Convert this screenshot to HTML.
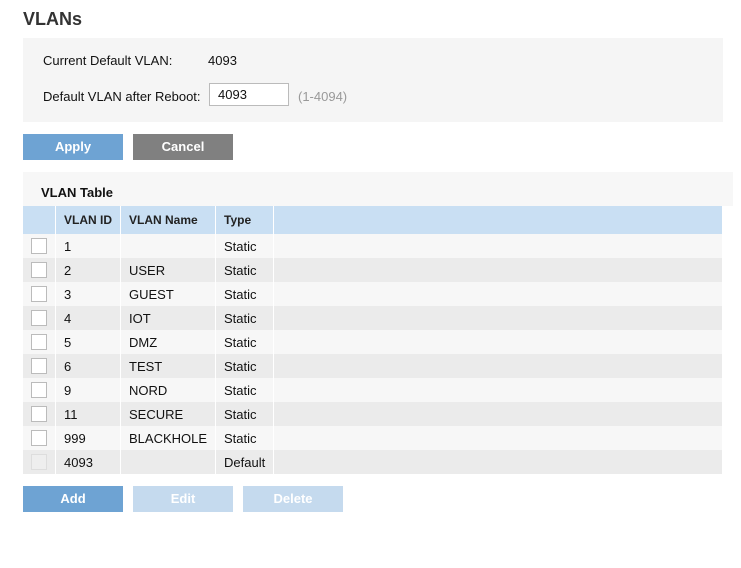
<!DOCTYPE html><html><head><style>
body{margin:0;background:#fff;font-family:"Liberation Sans",Arial,sans-serif;font-size:13px;color:#111;width:741px;height:568px;position:relative;overflow:hidden}
.a{position:absolute}
h1{position:absolute;left:23px;top:9px;margin:0;font-size:18px;font-weight:bold;color:#333}
.btn{position:absolute;width:100px;height:26px;line-height:26px;text-align:center;color:#fff;font-weight:bold;font-size:13px}
table{position:absolute;left:23px;top:206px;border-collapse:collapse;width:700px}
td,th{height:24px;padding:0 0 0 8px;text-align:left;border-right:1px solid #fff;font-size:13px}
th{height:28px;background:#c9dff3;font-weight:bold;color:#222;font-size:12px}
tr:nth-child(even) td{background:#f7f7f7}
tr:nth-child(odd) td{background:#ebebeb}
.cb{display:inline-block;width:14px;height:14px;border:1px solid #bbb;background:#fff;vertical-align:middle}
.cb.d{background:#eee;border-color:#ddd}
</style></head><body>
<h1>VLANs</h1>
<div class="a" style="left:23px;top:38px;width:700px;height:84px;background:#f5f5f5"></div>
<div class="a" style="left:43px;top:53px">Current Default VLAN:</div>
<div class="a" style="left:208px;top:53px">4093</div>
<div class="a" style="left:43px;top:89px">Default VLAN after Reboot:</div>
<div class="a" style="left:209px;top:83px;width:70px;height:21px;border:1px solid #bbb;background:#fff;padding-left:8px;line-height:21px;box-sizing:content-box">4093</div>
<div class="a" style="left:298px;top:89px;color:#999">(1-4094)</div>
<div class="btn" style="left:23px;top:134px;background:#6ea3d3">Apply</div>
<div class="btn" style="left:133px;top:134px;background:#808080">Cancel</div>
<div class="a" style="left:23px;top:172px;width:710px;height:34px;background:#f7f7f7"></div>
<div class="a" style="left:41px;top:185px;font-weight:bold">VLAN Table</div>
<table>
<tr><th style="width:24px"></th><th style="width:56px">VLAN ID</th><th style="width:86px">VLAN Name</th><th style="width:49px">Type</th><th></th></tr>
<tr><td><span class="cb"></span></td><td>1</td><td></td><td>Static</td><td></td></tr>
<tr><td><span class="cb"></span></td><td>2</td><td>USER</td><td>Static</td><td></td></tr>
<tr><td><span class="cb"></span></td><td>3</td><td>GUEST</td><td>Static</td><td></td></tr>
<tr><td><span class="cb"></span></td><td>4</td><td>IOT</td><td>Static</td><td></td></tr>
<tr><td><span class="cb"></span></td><td>5</td><td>DMZ</td><td>Static</td><td></td></tr>
<tr><td><span class="cb"></span></td><td>6</td><td>TEST</td><td>Static</td><td></td></tr>
<tr><td><span class="cb"></span></td><td>9</td><td>NORD</td><td>Static</td><td></td></tr>
<tr><td><span class="cb"></span></td><td>11</td><td>SECURE</td><td>Static</td><td></td></tr>
<tr><td><span class="cb"></span></td><td>999</td><td>BLACKHOLE</td><td>Static</td><td></td></tr>
<tr><td><span class="cb d"></span></td><td>4093</td><td></td><td>Default</td><td></td></tr>
</table>
<div class="btn" style="left:23px;top:486px;background:#6ea3d3">Add</div>
<div class="btn" style="left:133px;top:486px;background:#c5daee">Edit</div>
<div class="btn" style="left:243px;top:486px;background:#c5daee">Delete</div>
</body></html>
